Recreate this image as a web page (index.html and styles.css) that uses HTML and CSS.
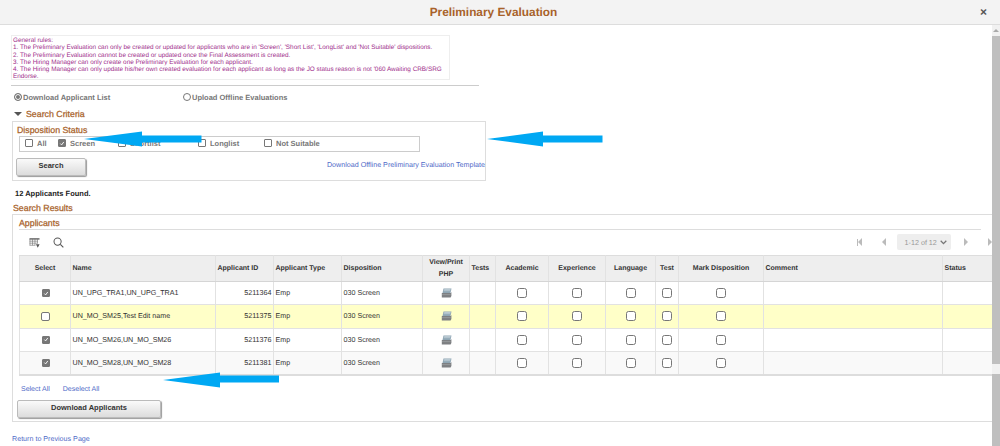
FILE: index.html
```html
<!DOCTYPE html>
<html lang="en">
<head>
<meta charset="utf-8">
<title>Preliminary Evaluation</title>
<link rel="stylesheet" href="styles.css">
</head>
<body>
<svg class="defs" width="0" height="0" aria-hidden="true">
  <symbol id="tick" viewBox="0 0 9 9"><path d="M2 4.6 3.9 6.6 7.2 2.2" fill="none" stroke="#fff" stroke-width="1.4"/></symbol>
  <symbol id="printer" viewBox="0 0 11 10"><path d="M2.5 0.5H10.5L9.5 5H1.5Z" fill="#8fa6b4"/><path d="M3.2 1.5H9.6M2.9 2.7H9.3" stroke="#d5e0e6" stroke-width=".6"/><path d="M0.8 5H9.8L10.4 4V8L9.6 9.6H0.8Z" fill="#7d7f82"/><path d="M1 6.6H9.6" stroke="#a5a7a9" stroke-width=".6"/></symbol>
</svg>
<header class="titlebar">
  <h1>Preliminary Evaluation</h1>
  <span class="close">×</span>
</header>
<div class="frame">
  <main class="content">
    <div class="rules">General rules:<br>1. The Preliminary Evaluation can only be created or updated for applicants who are in 'Screen', 'Short List', 'LongList' and 'Not Suitable' dispositions.<br>2. The Preliminary Evaluation cannot be created or updated once the Final Assessment is created.<br>3. The Hiring Manager can only create one Preliminary Evaluation for each applicant.<br>4. The Hiring Manager can only update his/her own created evaluation for each applicant as long as the JO status reason is not '060 Awaiting CRB/SRG Endorse.</div>
    <hr class="rule">
    <div class="modes">
      <label class="mode mode-first"><span class="radio on"></span>Download Applicant List</label>
      <label class="mode"><span class="radio"></span>Upload Offline Evaluations</label>
    </div>
    <div class="collapse-head"><span class="caret"></span>Search Criteria</div>
    <section class="criteria">
      <div class="label-brown">Disposition Status</div>
      <div class="status-box">
        <label class="opt opt-all"><span class="cb"></span>All</label>
        <label class="opt opt-screen"><span class="cb checked"><svg width="9" height="9"><use href="#tick"/></svg></span>Screen</label>
        <label class="opt opt-short"><span class="cb"></span>Shortlist</label>
        <label class="opt opt-long"><span class="cb"></span>Longlist</label>
        <label class="opt"><span class="cb"></span>Not Suitable</label>
      </div>
      <div class="criteria-foot">
        <button class="btn btn-search" type="button">Search</button>
        <a class="link" href="#">Download Offline Preliminary Evaluation Template</a>
      </div>
    </section>
    <p class="found">12 Applicants Found.</p>
    <div class="label-brown results-head">Search Results</div>
    <section class="results">
      <div class="label-brown applicants-head">Applicants</div>
      <div class="gridwrap">
        <div class="toolbar">
          <svg class="tool" width="11" height="10" viewBox="0 0 12 11"><path d="M0.5 1H11.5" stroke="#666" stroke-width="1.6"/><path d="M0.5 3.5H9.5M0.5 5.7H9.5M0.5 8H7M1 1V8M3.8 1V8M6.5 1V8M9.3 1V6" stroke="#777" stroke-width=".7" fill="none"/><path d="M7.6 7H11.6L9.6 10.6Z" fill="#555"/></svg>
          <svg class="tool tool-search" width="11" height="11" viewBox="0 0 12 12"><circle cx="5" cy="5" r="3.9" fill="none" stroke="#555" stroke-width="1.1"/><path d="M8 8 11.3 11.3" stroke="#555" stroke-width="1.3"/></svg>
          <div class="pager">
            <span class="pg-first"><i></i><b></b></span>
            <span class="pg-prev"><b></b></span>
            <span class="pg-select">1-12 of 12<svg width="7" height="5" viewBox="0 0 7 5"><path d="M.7.8 3.5 3.6 6.3.8" fill="none" stroke="#777" stroke-width="1.3"/></svg></span>
            <span class="pg-next"><b></b></span>
            <span class="pg-last"><b></b><i></i></span>
          </div>
        </div>
        <table class="grid">
          <colgroup>
            <col class="c1"><col class="c2"><col class="c3"><col class="c4"><col class="c5"><col class="c6"><col class="c7"><col class="c8"><col class="c9"><col class="c10"><col class="c11"><col class="c12"><col class="c13"><col class="c14">
          </colgroup>
          <thead>
            <tr>
              <th class="mid">Select</th><th>Name</th><th>Applicant ID</th><th>Applicant Type</th><th>Disposition</th><th class="mid view">View/Print<br>PHP</th><th>Tests</th><th class="mid">Academic</th><th class="mid">Experience</th><th class="mid">Language</th><th class="mid">Test</th><th class="mid">Mark Disposition</th><th>Comment</th><th>Status</th>
            </tr>
          </thead>
          <tbody>
            <tr>
              <td class="mid first"><span class="cb checked"><svg width="9" height="9"><use href="#tick"/></svg></span></td><td>UN_UPG_TRA1,UN_UPG_TRA1</td><td class="num">5211364</td><td>Emp</td><td>030 Screen</td><td class="mid"><svg class="print" width="11" height="10"><use href="#printer"/></svg></td><td></td><td class="mid"><span class="box"></span></td><td class="mid"><span class="box"></span></td><td class="mid"><span class="box"></span></td><td class="mid"><span class="box"></span></td><td class="mid"><span class="box"></span></td><td></td><td></td>
            </tr>
            <tr class="hilite">
              <td class="mid first"><span class="cb white"></span></td><td>UN_MO_SM25,Test Edit name</td><td class="num">5211375</td><td>Emp</td><td>030 Screen</td><td class="mid"><svg class="print" width="11" height="10"><use href="#printer"/></svg></td><td></td><td class="mid"><span class="box"></span></td><td class="mid"><span class="box"></span></td><td class="mid"><span class="box"></span></td><td class="mid"><span class="box"></span></td><td class="mid"><span class="box"></span></td><td></td><td></td>
            </tr>
            <tr>
              <td class="mid first"><span class="cb checked"><svg width="9" height="9"><use href="#tick"/></svg></span></td><td>UN_MO_SM26,UN_MO_SM26</td><td class="num">5211376</td><td>Emp</td><td>030 Screen</td><td class="mid"><svg class="print" width="11" height="10"><use href="#printer"/></svg></td><td></td><td class="mid"><span class="box"></span></td><td class="mid"><span class="box"></span></td><td class="mid"><span class="box"></span></td><td class="mid"><span class="box"></span></td><td class="mid"><span class="box"></span></td><td></td><td></td>
            </tr>
            <tr class="alt">
              <td class="mid first"><span class="cb checked"><svg width="9" height="9"><use href="#tick"/></svg></span></td><td>UN_MO_SM28,UN_MO_SM28</td><td class="num">5211381</td><td>Emp</td><td>030 Screen</td><td class="mid"><svg class="print" width="11" height="10"><use href="#printer"/></svg></td><td></td><td class="mid"><span class="box"></span></td><td class="mid"><span class="box"></span></td><td class="mid"><span class="box"></span></td><td class="mid"><span class="box"></span></td><td class="mid"><span class="box"></span></td><td></td><td></td>
            </tr>
          </tbody>
        </table>
      </div>
      <div class="select-links"><a class="link" href="#">Select All</a><a class="link" href="#">Deselect All</a></div>
      <button class="btn btn-download" type="button">Download Applicants</button>
    </section>
    <a class="link return" href="#">Return to Previous Page</a>
  </main>
  <div class="scrollbar">
    <span class="sb-up"></span>
    <span class="sb-thumb sb-a"></span>
    <span class="sb-thumb sb-b"></span>
  </div>
  <svg class="arrow arrow-1" width="118" height="16" viewBox="0 0 118 16"><path d="M0 8 58 .5V4.500H117.500V11.500H58V15.500Z" fill="#00a8f3"/></svg>
  <svg class="arrow arrow-2" width="116" height="16" viewBox="0 0 116 16"><path d="M0 8 56 .5V4.500H115.500V11.500H56V15.500Z" fill="#00a8f3"/></svg>
  <svg class="arrow arrow-3" width="116" height="16" viewBox="0 0 116 16"><path d="M0 8 57 .5V3.500H116V10.500H57V15.500Z" fill="#00a8f3"/></svg>
</div>
</body>
</html>
```

FILE: styles.css
```css
* { box-sizing: border-box; }
html, body { margin: 0; height: 446px; overflow: hidden; background: #fff; }
body { font-family: "Liberation Sans", Arial, sans-serif; font-size: 7.6px; color: #333; text-rendering: geometricPrecision; }
.defs { position: absolute; }

.titlebar { height: 25px; background: #f3f3f3; border-bottom: 1px solid #ddd; display: flex; align-items: center; justify-content: center; position: relative; padding-right: 13px; }
.titlebar h1 { margin: 0 0 1px; font-size: 11.85px; font-weight: bold; color: #a8622a; }
.close { position: absolute; right: 13px; top: 4px; font-size: 12px; font-weight: bold; color: #555; line-height: 16px; }

.frame { position: relative; height: 421px; display: flex; overflow: hidden; }
.content { width: 992px; flex: none; overflow: hidden; padding-top: 10px; }
.scrollbar { width: 8px; flex: none; background: #f1f1f1; display: flex; flex-direction: column; padding-top: 1px; }
.sb-up { height: 10px; flex: none; position: relative; }
.sb-up::after { content: ""; position: absolute; left: 1px; top: 3px; border: 3px solid transparent; border-top: 0; border-bottom: 3px solid #aaa; }
.sb-thumb { display: block; width: 8px; background: #bfbfbf; flex: none; }
.sb-a { height: 328px; }
.sb-b { height: 72px; margin-top: 10px; }

.rules { margin-left: 11px; width: 439px; height: 45px; padding: 1px 1px; border: 1px solid #eee; color: #a0308c; font-size: 6.38px; line-height: 7.3px; }
.rule { margin: 5px 0 0 11px; width: 468px; height: 1px; border: 0; background: #ccc; }

.modes { display: flex; margin: 6px 0 0 14px; height: 10px; align-items: center; font-size: 7.5px; font-weight: bold; color: #777; }
.mode { display: flex; align-items: center; }
.mode-first { width: 169px; }
.radio { width: 8px; height: 8px; border-radius: 50%; border: 1px solid #777; margin-right: 1px; background: #fff; }
.radio.on { background: #777; box-shadow: inset 0 0 0 1px #fff; }

.collapse-head { margin: 7px 0 0 14px; height: 10px; line-height: 10px; font-size: 8.8px; font-weight: normal; -webkit-text-stroke: .25px #a8622a; color: #a8622a; display: flex; align-items: center; }
.caret { width: 0; height: 0; border: 4px solid transparent; border-top: 4px solid #555; border-bottom: 0; margin-right: 4px; }

.label-brown { color: #a8622a; font-weight: normal; -webkit-text-stroke: .25px #a8622a; font-size: 8.8px; line-height: 11px; }

.criteria { margin: 2px 0 0 12px; width: 474px; height: 60px; border: 1px solid #ddd; padding: 3px 0 0 4px; }
.status-box { margin: 0 0 0 2px; width: 401px; height: 16px; border: 1px solid #ccc; display: flex; align-items: center; padding: 0 0 2px 5px; font-size: 7.5px; font-weight: bold; color: #777; }
.opt { display: flex; align-items: center; }
.opt .cb { margin-right: 4px; }
.opt-all { width: 33px; }
.opt-screen { width: 60px; }
.opt-short { width: 80px; }
.opt-long { width: 66px; }

.cb { display: inline-flex; width: 8px; height: 8px; border: 1px solid #777; border-radius: 1px; background: #fff; vertical-align: middle; align-items: center; justify-content: center; }
.cb.checked { background: #777; border-color: #777; }
.cb.white { width: 9px; height: 9px; border-radius: 2px; }
.box { display: inline-block; width: 10px; height: 10px; border: 1px solid #777; border-radius: 2.5px; background: #fff; vertical-align: middle; }

.criteria-foot { display: flex; justify-content: space-between; align-items: flex-start; margin: 6px 0 0 -1px; }
.btn { display: block; padding: 0; border: 1px solid #bbb; border-radius: 2px; background: linear-gradient(#fafafa, #dcdcdc); box-shadow: 1px 1px 1px #999; font-family: inherit; font-size: 7.5px; font-weight: bold; color: #333; line-height: 13px; }
.btn-search { width: 70px; height: 18px; padding-bottom: 3px; }
.link { color: #4f6ac8; text-decoration: none; font-size: 7.15px; }
.criteria-foot .link { margin-top: 3px; white-space: nowrap; }

.found { margin: 8px 0 0 15px; height: 10px; line-height: 10px; font-size: 7.5px; font-weight: bold; color: #222; }
.results-head { margin: 4px 0 0 13px; height: 11px; }
.results { margin: 0 0 0 12px; width: 981px; height: 208px; border: 1px solid #ddd; padding: 3px 0 0 6px; }
.applicants-head { height: 11px; }
.gridwrap { margin: 0; width: 962px; border-top: 1px solid #ddd; }
.toolbar { height: 25px; display: flex; align-items: center; padding-left: 10px; position: relative; }
.tool { flex: none; }
.tool-search { margin-left: 13px; }
.pager { position: absolute; left: 838px; top: 4px; height: 16px; display: flex; align-items: center; }
.pager b { display: inline-block; width: 0; height: 0; border: 4px solid transparent; }
.pager i { display: inline-block; width: 1px; height: 7px; background: #bbb; }
.pg-first, .pg-prev, .pg-next, .pg-last { display: flex; align-items: center; }
.pg-first b, .pg-prev b { border-left: 0; border-right: 4px solid #bbb; }
.pg-next b, .pg-last b { border-right: 0; border-left: 4px solid #bbb; }
.pg-first { width: 25px; }
.pg-prev { width: 15px; }
.pg-next { margin-left: 13px; width: 24px; }
.pg-select { width: 54px; height: 16px; background: #eee; border-radius: 2px; color: #999; font-size: 7.2px; display: flex; align-items: center; justify-content: space-between; padding: 0 4px 0 7.5px; }

.grid { border-collapse: collapse; table-layout: fixed; width: 973px; border-bottom: 2px solid #ddd; }
.c1 { width: 51px; } .c2 { width: 145px; } .c3 { width: 58px; } .c4 { width: 68px; } .c5 { width: 81px; } .c6 { width: 47px; } .c7 { width: 26px; }
.c8 { width: 53px; } .c9 { width: 57px; } .c10 { width: 50px; } .c11 { width: 23px; } .c12 { width: 85px; } .c13 { width: 179px; } .c14 { width: 50px; }
.grid th, .grid td { border: 1px solid #e2e2e2; border-top: 0; padding: 0 1.5px; white-space: nowrap; overflow: hidden; text-align: left; }
.grid th { background: #eee; height: 26px; font-size: 7px; line-height: 12px; color: #333; border-top: 1px solid #ddd; border-bottom: 1px solid #d5d5d5; }
.grid td { height: 23.25px; font-size: 7.15px; color: #333; }
.grid th.mid, .grid td.mid { text-align: center; padding: 0; }
.grid td.first { padding-left: 1px; }
.grid td.num { text-align: right; }
.print { vertical-align: middle; }
.hilite td { background: #ffffc8; }
.alt td { background: #f9f9f9; }

.select-links { margin: 9px 0 0 2px; height: 10px; line-height: 10px; display: flex; gap: 13px; font-size: 7px; }
.select-links .link { font-size: 7px; }
.btn-download { margin: 5px 0 0 -2px; width: 144px; height: 18px; padding-bottom: 2px; }
.return { display: block; margin: 12px 0 0 12px; line-height: 10px; }

.arrow { position: absolute; }
.arrow-1 { left: 84px; top: 106px; }
.arrow-2 { left: 487px; top: 106px; }
.arrow-3 { left: 163px; top: 347px; }
```
